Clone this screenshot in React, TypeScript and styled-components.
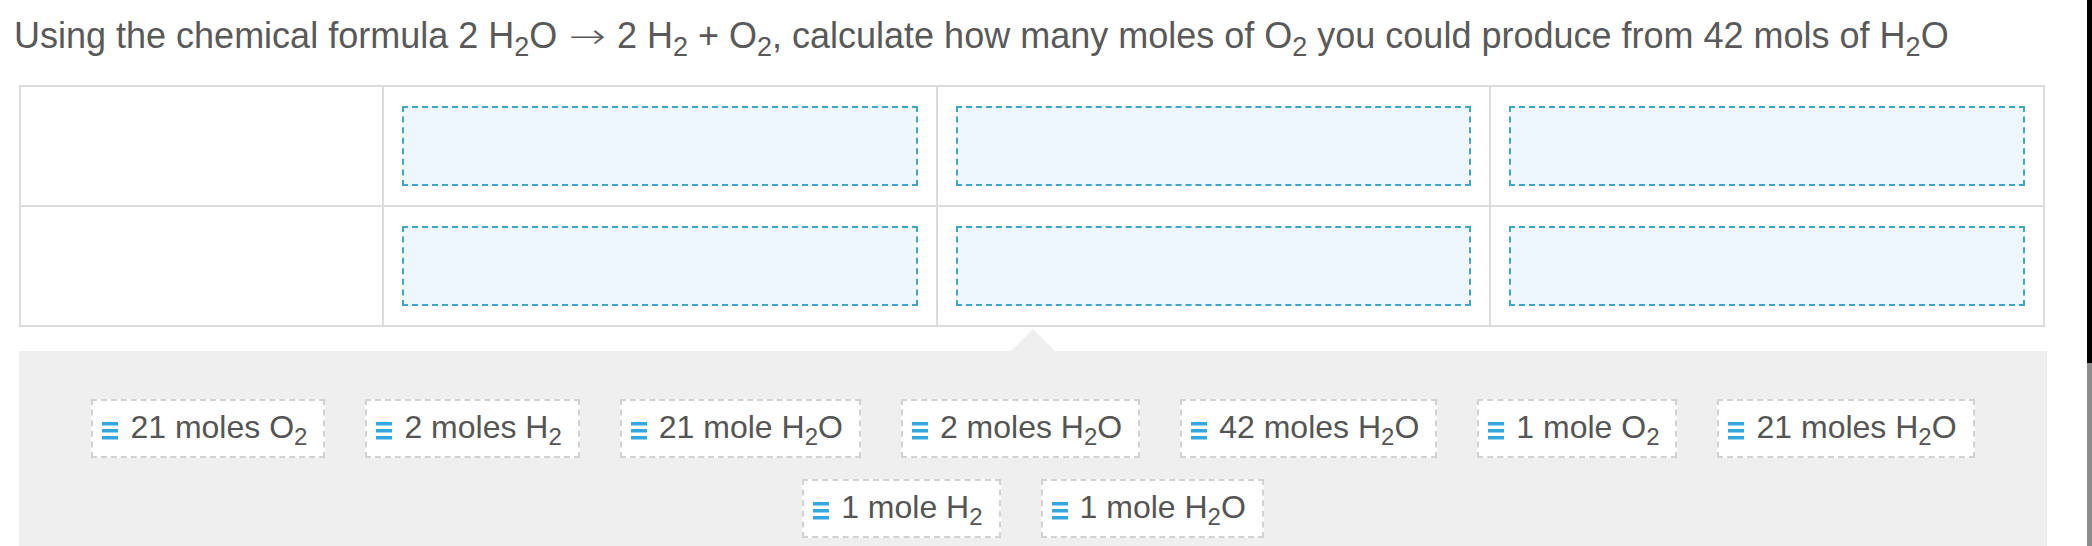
import React from "react";
import styled, { createGlobalStyle } from "styled-components";

const GlobalStyle = createGlobalStyle`
  html, body {
    margin: 0;
    padding: 0;
    background: #ffffff;
  }
  body {
    font-family: "Liberation Sans", Arial, Helvetica, sans-serif;
    color: #595959;
    overflow: hidden;
  }
`;

const Page = styled.div`
  padding: 12px 45px 0 19px;
  width: 2028px;
`;

const Title = styled.h1`
  margin: 0 0 25px -5px;
  font-size: 36px;
  font-weight: 400;
  line-height: 48px;
  color: #595959;
  white-space: nowrap;
`;

const Sub = styled.sub`
  font-size: 0.75em;
  vertical-align: -0.3em;
  line-height: 0;
`;

const Arrow = styled.span`
  display: inline-block;
  font-family: "DejaVu Sans", sans-serif;
  font-weight: 200;
  font-size: 0.95em;
  transform: scaleX(1.3);
  margin: 0 5px 0 6px;
`;

const Table = styled.table`
  width: 2026px;
  border-collapse: collapse;
  table-layout: fixed;
`;

const LabelCol = styled.col`
  width: 363px;
`;

const Cell = styled.td`
  border: 2px solid #dcdcdc;
  padding: 19px 18px;
  vertical-align: middle;
`;

const DropZone = styled.div`
  height: 76px;
  border: 2px dashed #41a6c6;
  background: #eef7fd;
`;

const Panel = styled.div`
  position: relative;
  margin-top: 24px;
  background: #efefef;
  padding: 48px 20px 40px;
  display: flex;
  flex-wrap: wrap;
  justify-content: center;
  gap: 21px 40px;
`;

const Notch = styled.div`
  position: absolute;
  top: -22px;
  left: 50%;
  transform: translateX(-50%);
  width: 0;
  height: 0;
  border-left: 22px solid transparent;
  border-right: 22px solid transparent;
  border-bottom: 22px solid #efefef;
`;

const Chip = styled.div`
  display: inline-flex;
  align-items: center;
  gap: 12px;
  box-sizing: border-box;
  height: 59px;
  padding: 0 16px 3px 9px;
  border: 2px dashed #d2d2d2;
  background: #ffffff;
  font-size: 32px;
  color: #555555;
  white-space: nowrap;
`;

const HandleIcon = styled.svg`
  flex: none;
  width: 16px;
  height: 18px;
  margin-top: 8px;
`;

const ScrollTrack = styled.div`
  position: fixed;
  top: 0;
  right: 0;
  bottom: 0;
  width: 5px;
  display: flex;
  flex-direction: column;
  background: #8c8c8c;
`;

const ScrollThumb = styled.div`
  height: 363px;
  background: #000000;
`;

type Part = { t: string; sub?: boolean; arrow?: boolean };

const Formula: React.FC<{ parts: Part[] }> = ({ parts }) => (
  <>
    {parts.map((p, i) =>
      p.sub ? (
        <Sub key={i}>{p.t}</Sub>
      ) : p.arrow ? (
        <Arrow key={i}>{p.t}</Arrow>
      ) : (
        <React.Fragment key={i}>{p.t}</React.Fragment>
      )
    )}
  </>
);

const Handle = () => (
  <HandleIcon viewBox="0 0 16 18" aria-hidden="true">
    <rect x="0" y="0" width="16" height="3.5" fill="#35a6de" />
    <rect x="0" y="7" width="16" height="3.5" fill="#35a6de" />
    <rect x="0" y="14" width="16" height="3.5" fill="#35a6de" />
  </HandleIcon>
);

const chips: Part[][] = [
  [{ t: "21 moles O" }, { t: "2", sub: true }],
  [{ t: "2 moles H" }, { t: "2", sub: true }],
  [{ t: "21 mole H" }, { t: "2", sub: true }, { t: "O" }],
  [{ t: "2 moles H" }, { t: "2", sub: true }, { t: "O" }],
  [{ t: "42 moles H" }, { t: "2", sub: true }, { t: "O" }],
  [{ t: "1 mole O" }, { t: "2", sub: true }],
  [{ t: "21 moles H" }, { t: "2", sub: true }, { t: "O" }],
  [{ t: "1 mole H" }, { t: "2", sub: true }],
  [{ t: "1 mole H" }, { t: "2", sub: true }, { t: "O" }],
];

const title: Part[] = [
  { t: "Using the chemical formula 2 H" },
  { t: "2", sub: true },
  { t: "O " },
  { t: "\u2192", arrow: true },
  { t: " 2 H" },
  { t: "2", sub: true },
  { t: " + O" },
  { t: "2", sub: true },
  { t: ", calculate how many moles of O" },
  { t: "2", sub: true },
  { t: " you could produce from 42 mols of H" },
  { t: "2", sub: true },
  { t: "O" },
];

export default function App() {
  return (
    <>
      <GlobalStyle />
      <Page>
        <Title>
          <Formula parts={title} />
        </Title>
        <Table>
          <colgroup>
            <LabelCol />
            <col />
            <col />
            <col />
          </colgroup>
          <tbody>
            {[0, 1].map((r) => (
              <tr key={r}>
                <Cell />
                {[0, 1, 2].map((c) => (
                  <Cell key={c}>
                    <DropZone />
                  </Cell>
                ))}
              </tr>
            ))}
          </tbody>
        </Table>
        <Panel>
          <Notch />
          {chips.map((parts, i) => (
            <Chip key={i}>
              <Handle />
              <span>
                <Formula parts={parts} />
              </span>
            </Chip>
          ))}
        </Panel>
      </Page>
      <ScrollTrack>
        <ScrollThumb />
      </ScrollTrack>
    </>
  );
}
